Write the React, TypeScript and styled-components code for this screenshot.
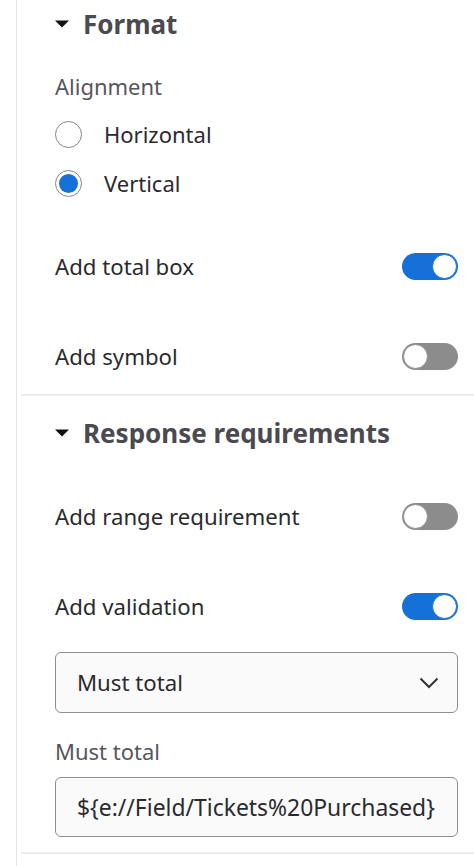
import React from "react";
import styled, { createGlobalStyle } from "styled-components";

const GlobalStyle = createGlobalStyle`
  html, body {
    margin: 0;
    padding: 0;
    background: #ffffff;
  }
  body {
    font-family: "Noto Sans", "Open Sans", Arial, sans-serif;
    -webkit-font-smoothing: antialiased;
  }
`;

const Panel = styled.div`
  margin-left: 16px;
  min-height: 866px;
  border-left: 1px solid #e3e3e3;
  padding-left: 4px;
  box-sizing: border-box;
`;

const Section = styled.section<{ $top: number; $bottom: number }>`
  display: flex;
  flex-direction: column;
  padding: ${(p) => p.$top}px 16px ${(p) => p.$bottom}px 34px;
  border-bottom: 2px solid #ececec;
`;

const Heading = styled.div<{ $mt?: number }>`
  display: flex;
  align-items: center;
  gap: 13px;
  height: 48px;
  margin-top: ${(p) => p.$mt ?? 0}px;
  margin-left: -1px;
  font-size: 26px;
  font-weight: 700;
  color: #4a4a50;
`;

const Caret = styled.svg`
  width: 16px;
  height: 8px;
  flex-shrink: 0;
`;

const FieldLabel = styled.div<{ $mt: number }>`
  display: flex;
  align-items: center;
  height: 32px;
  margin-top: ${(p) => p.$mt}px;
  font-size: 22px;
  color: #56565c;
`;

const RadioGroup = styled.div`
  display: flex;
  flex-direction: column;
  gap: 17px;
  margin-top: 16px;
`;

const RadioRow = styled.label`
  display: flex;
  align-items: center;
  gap: 22px;
  height: 32px;
  font-size: 22px;
  color: #2b2b2f;
`;

const RadioCircle = styled.span<{ $checked: boolean }>`
  box-sizing: border-box;
  width: 27px;
  height: 27px;
  border-radius: 50%;
  border: 1.5px solid #858585;
  background: #ffffff;
  display: flex;
  align-items: center;
  justify-content: center;

  &::after {
    content: "";
    width: 19px;
    height: 19px;
    border-radius: 50%;
    background: ${(p) => (p.$checked ? "#1571d8" : "transparent")};
  }
`;

const ToggleRow = styled.div<{ $mt: number }>`
  display: flex;
  align-items: center;
  justify-content: space-between;
  height: 40px;
  margin-top: ${(p) => p.$mt}px;
  font-size: 22.2px;
  color: #2b2b2f;
`;

const Track = styled.span<{ $on: boolean }>`
  box-sizing: border-box;
  width: 56px;
  height: 27px;
  border-radius: 14px;
  padding: 1px;
  background: ${(p) => (p.$on ? "#1571d8" : "#8c8c8c")};
  display: flex;
  justify-content: ${(p) => (p.$on ? "flex-end" : "flex-start")};
`;

const Knob = styled.span<{ $on: boolean }>`
  box-sizing: border-box;
  width: 25px;
  height: 25px;
  border-radius: 50%;
  background: #ffffff;
  border: 1px solid ${(p) => (p.$on ? "#1571d8" : "#8c8c8c")};
`;

const SelectBox = styled.div<{ $mt: number }>`
  box-sizing: border-box;
  display: flex;
  align-items: center;
  justify-content: space-between;
  height: 61px;
  margin-top: ${(p) => p.$mt}px;
  padding: 0 18px 0 21px;
  border: 1.5px solid #8e8e8e;
  border-radius: 6px;
  background: #fafafa;
  font-size: 22.2px;
  color: #2b2b2f;
`;

const Chevron = styled.svg`
  width: 20px;
  height: 12px;
`;

const TextInput = styled.div<{ $mt: number }>`
  box-sizing: border-box;
  display: flex;
  align-items: center;
  height: 60px;
  margin-top: ${(p) => p.$mt}px;
  padding: 0 21px;
  border: 1.5px solid #8e8e8e;
  border-radius: 6px;
  background: #fafafa;
  font-size: 22.9px;
  color: #2b2b2f;
  white-space: nowrap;
  overflow: hidden;
`;

const CaretIcon = () => (
  <Caret viewBox="0 0 16 8">
    <path d="M1 0.5 L15 0.5 L8 7.5 Z" fill="#111" />
  </Caret>
);

const Toggle = ({ on }: { on: boolean }) => (
  <Track $on={on}>
    <Knob $on={on} />
  </Track>
);

const Radio = ({ label, checked }: { label: string; checked: boolean }) => (
  <RadioRow>
    <RadioCircle $checked={checked} />
    {label}
  </RadioRow>
);

export default function App() {
  return (
    <>
      <GlobalStyle />
      <Panel>
        <Section $top={0} $bottom={18}>
          <Heading>
            <CaretIcon />
            Format
          </Heading>
          <FieldLabel $mt={22}>Alignment</FieldLabel>
          <RadioGroup>
            <Radio label="Horizontal" checked={false} />
            <Radio label="Vertical" checked />
          </RadioGroup>
          <ToggleRow $mt={47}>
            Add total box
            <Toggle on />
          </ToggleRow>
          <ToggleRow $mt={50}>
            Add symbol
            <Toggle on={false} />
          </ToggleRow>
        </Section>
        <Section $top={0} $bottom={15}>
          <Heading $mt={13}>
            <CaretIcon />
            Response requirements
          </Heading>
          <ToggleRow $mt={39}>
            Add range requirement
            <Toggle on={false} />
          </ToggleRow>
          <ToggleRow $mt={50}>
            Add validation
            <Toggle on />
          </ToggleRow>
          <SelectBox $mt={26}>
            Must total
            <Chevron viewBox="0 0 20 12">
              <polyline
                points="1.5,1.5 10,10 18.5,1.5"
                fill="none"
                stroke="#333"
                strokeWidth="2"
              />
            </Chevron>
          </SelectBox>
          <FieldLabel $mt={22}>Must total</FieldLabel>
          <TextInput $mt={10}>{"${e://Field/Tickets%20Purchased}"}</TextInput>
        </Section>
      </Panel>
    </>
  );
}
